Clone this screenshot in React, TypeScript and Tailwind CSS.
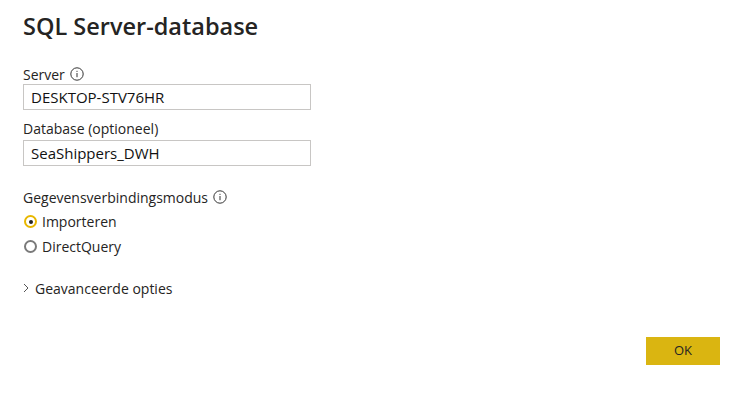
import React from 'react';

function InfoIcon() {
  return (
    <svg width="14" height="14" viewBox="0 0 14 14" className="ml-[5px] inline-block">
      <circle cx="7" cy="7" r="6.2" fill="none" stroke="#333" strokeWidth="1" />
      <rect x="6.5" y="6" width="1" height="4.2" fill="#333" />
      <rect x="6.5" y="3.8" width="1" height="1.1" fill="#333" />
    </svg>
  );
}

function Radio({ checked, label }: { checked?: boolean; label: string }) {
  return (
    <div className="flex h-[25px] items-center">
      <span
        className={
          checked
            ? 'ml-[1px] flex h-[13px] w-[13px] items-center justify-center rounded-full border-[2.5px] border-[#e8b700] bg-white'
            : 'ml-[1px] flex h-[13px] w-[13px] items-center justify-center rounded-full border-[2.5px] border-[#7a7a7a] bg-white'
        }
      >
        {checked && <span className="h-[4px] w-[4px] rounded-full bg-[#252423]" />}
      </span>
      <span className="ml-[5px]">{label}</span>
    </div>
  );
}

export default function App() {
  return (
    <div
      className="h-[394px] w-[731px] bg-white text-[14px] text-[#252423]"
      style={{ fontFamily: '"Open Sans", "Noto Sans", sans-serif' }}
    >
      <div className="pl-[23px] pt-[8px]">
        <h1 className="text-[23.5px] leading-[36px] font-semibold text-[#252423]">SQL Server-database</h1>

        <div className="mt-[20px] flex h-[20px] items-center">
          Server
          <InfoIcon />
        </div>
        <div className="flex h-[26px] w-[288px] items-center border border-[#c8c6c4] px-[7px] text-[15px] text-[#111]">
          DESKTOP-STV76HR
        </div>

        <div className="mt-[8px] flex h-[20px] items-center">Database (optioneel)</div>
        <div className="mt-[2px] flex h-[26px] w-[288px] items-center border border-[#c8c6c4] px-[7px] text-[15px] text-[#111]">
          SeaShippers_DWH
        </div>

        <div className="mt-[21px] flex h-[20px] items-center">
          Gegevensverbindingsmodus
          <InfoIcon />
        </div>
        <div className="mt-[2px]">
          <Radio checked label="Importeren" />
          <Radio label="DirectQuery" />
        </div>

        <div className="mt-[19px] flex h-[20px] items-center">
          <svg width="6" height="10" viewBox="0 0 6 10" className="mr-[6px]">
            <path d="M1 1 L5 5 L1 9" fill="none" stroke="#555" strokeWidth="1" />
          </svg>
          Geavanceerde opties
        </div>
      </div>

      <div className="mt-[39px] flex justify-end pr-[11px]">
        <button className="h-[28px] w-[74px] bg-[#dab511] text-[13px] text-[#252423]">OK</button>
      </div>
    </div>
  );
}
